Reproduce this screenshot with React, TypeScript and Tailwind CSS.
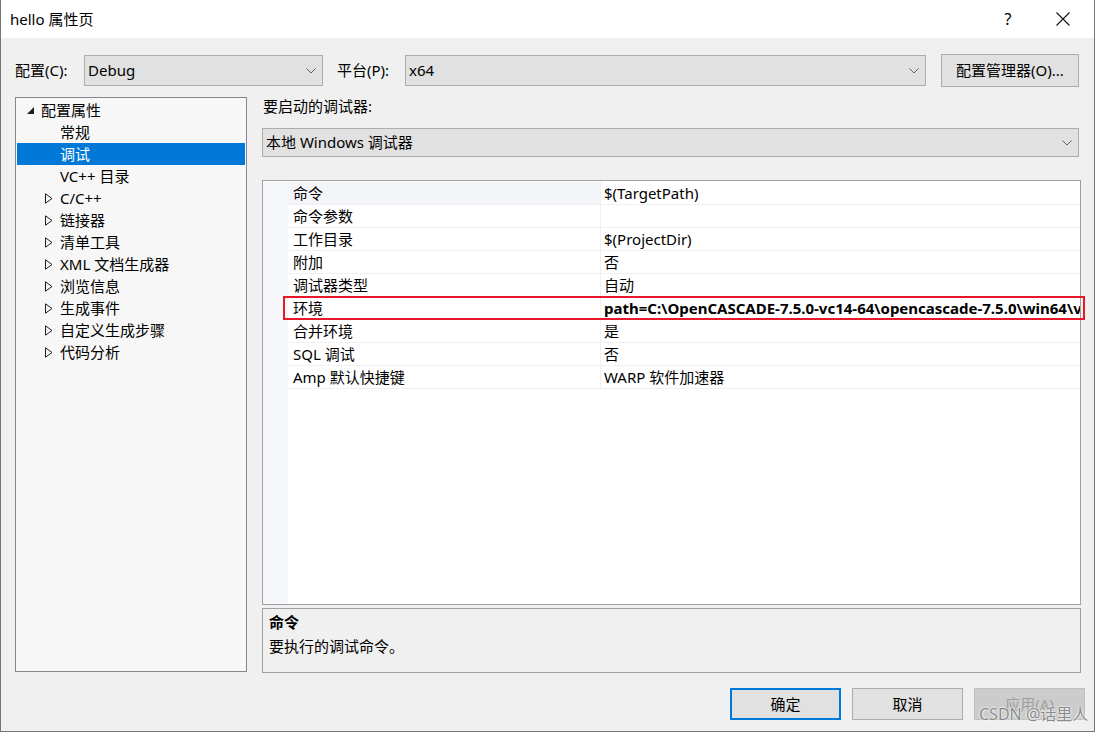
import React from "react";

const FONT = { fontFamily: '"Noto Sans", "Noto Sans CJK SC", sans-serif' };

function Chevron() {
  return (
    <svg width="10" height="6" viewBox="0 0 10 6" className="shrink-0">
      <path d="M0.5 0.5 L5 5 L9.5 0.5" fill="none" stroke="#606060" strokeWidth="1" />
    </svg>
  );
}

function Combo({ text, className }: { text: string; className: string }) {
  return (
    <div
      className={`shrink-0 flex items-center justify-between border border-[#adadad] bg-[#e1e1e1] pl-[3px] pr-[6px] ${className}`}
    >
      <span>{text}</span>
      <Chevron />
    </div>
  );
}

type TreeItem = { label: string; kind: "open" | "closed" | "leaf"; selected?: boolean };

const tree: TreeItem[] = [
  { label: "配置属性", kind: "open" },
  { label: "常规", kind: "leaf" },
  { label: "调试", kind: "leaf", selected: true },
  { label: "VC++ 目录", kind: "leaf" },
  { label: "C/C++", kind: "closed" },
  { label: "链接器", kind: "closed" },
  { label: "清单工具", kind: "closed" },
  { label: "XML 文档生成器", kind: "closed" },
  { label: "浏览信息", kind: "closed" },
  { label: "生成事件", kind: "closed" },
  { label: "自定义生成步骤", kind: "closed" },
  { label: "代码分析", kind: "closed" },
];

const props: { name: string; value: string; bold?: boolean }[] = [
  { name: "命令", value: "$(TargetPath)" },
  { name: "命令参数", value: "" },
  { name: "工作目录", value: "$(ProjectDir)" },
  { name: "附加", value: "否" },
  { name: "调试器类型", value: "自动" },
  { name: "环境", value: "path=C:\\OpenCASCADE-7.5.0-vc14-64\\opencascade-7.5.0\\win64\\vc14\\bin;%PATH%", bold: true },
  { name: "合并环境", value: "是" },
  { name: "SQL 调试", value: "否" },
  { name: "Amp 默认快捷键", value: "WARP 软件加速器" },
];

export default function App() {
  return (
    <div
      style={FONT}
      className="w-[1095px] h-[732px] flex flex-col border-x border-b border-[#767676] bg-[#f0f0f0] text-[15px] leading-none text-black overflow-hidden"
    >
      {/* Title bar */}
      <div className="h-[38px] shrink-0 bg-white flex items-center pl-[9px]">
        <span className="flex-1">hello 属性页</span>
        <span className="w-[20px] text-center text-[16px] mr-[36px]">?</span>
        <div className="w-[18px] flex justify-center mr-[22px]">
          <svg width="16" height="16" viewBox="0 0 16 16">
            <path d="M1.5 1.5 L14.5 14.5 M14.5 1.5 L1.5 14.5" stroke="#111" strokeWidth="1.1" />
          </svg>
        </div>
      </div>

      {/* Body */}
      <div className="flex flex-col pl-[14px] pr-[13px]">
        {/* Config row */}
        <div className="mt-[16px] h-[33px] flex items-center">
          <span className="w-[69px] shrink-0">配置(C):</span>
          <Combo text="Debug" className="w-[239px] h-[31px]" />
          <span className="ml-[14px] w-[68px] shrink-0">平台(P):</span>
          <Combo text="x64" className="w-[521px] h-[31px]" />
          <div className="ml-[15px] w-[138px] h-[33px] shrink-0 border border-[#adadad] bg-[#e1e1e1] flex items-center justify-center">
            配置管理器(O)...
          </div>
        </div>

        {/* Main */}
        <div className="mt-[10px] flex gap-[15px]">
          {/* Tree */}
          <div className="w-[232px] shrink-0 h-[575px] border border-[#828790] bg-[#f7f7f7] pt-[1px] px-[1px]">
            {tree.map((t) => (
              <div
                key={t.label}
                className={`h-[22px] flex items-center ${t.selected ? "bg-[#0078d7] text-white" : ""}`}
              >
                {t.kind === "open" ? (
                  <>
                    <span className="w-[17px] flex justify-end">
                      <svg width="7" height="7" viewBox="0 0 7 7">
                        <path d="M7 0 L7 7 L0 7 Z" fill="#1e1e1e" />
                      </svg>
                    </span>
                    <span className="ml-[7px]">{t.label}</span>
                  </>
                ) : t.kind === "closed" ? (
                  <>
                    <span className="w-[36px] flex justify-end">
                      <svg width="8" height="11" viewBox="0 0 8 11">
                        <path d="M0.5 0.8 L7 5.5 L0.5 10.2 Z" fill="none" stroke="#1e1e1e" strokeWidth="1" />
                      </svg>
                    </span>
                    <span className="ml-[7px]">{t.label}</span>
                  </>
                ) : (
                  <span className="ml-[43px]">{t.label}</span>
                )}
              </div>
            ))}
          </div>

          {/* Right column */}
          <div className="flex-1 min-w-0 flex flex-col">
            <div className="h-[16px] flex items-center pl-[1px] mt-[1px]">要启动的调试器:</div>
            <Combo text="本地 Windows 调试器" className="mt-[14px] w-[817px] h-[29px]" />

            {/* Property grid */}
            <div className="relative mt-[23px]">
              <div className="w-[819px] h-[425px] border border-[#a0a0a0] bg-white pt-[1px] overflow-hidden">
                {props.map((p, i) => (
                  <div key={p.name} className="h-[23px] flex">
                    <div className="w-[25px] shrink-0 bg-[#f5f7fb]" />
                    <div
                      className={`w-[313px] shrink-0 flex items-center pl-[5px] border-b border-r border-[#f0f0f0] ${
                        i === 0 ? "bg-[#f3f5f9]" : ""
                      }`}
                    >
                      {p.name}
                    </div>
                    <div
                      className={`flex-1 min-w-0 flex items-center pl-[3px] border-b border-[#f0f0f0] whitespace-nowrap overflow-hidden ${
                        p.bold ? "font-bold" : ""
                      }`}
                    >
                      {p.value}
                    </div>
                  </div>
                ))}
                <div className="h-full w-[25px] bg-[#f5f7fb]" />
              </div>
              {/* red annotation box */}
              <div className="absolute left-[21px] top-[116px] w-[802px] h-[24px] border-2 border-[#e6182a]" />
            </div>

            {/* Description */}
            <div className="mt-[3px] w-[819px] h-[65px] border border-[#a0a0a0] bg-[#f0f0f0] pl-[6px] pt-[5px]">
              <div className="font-bold h-[16px] flex items-center">命令</div>
              <div className="mt-[8px] h-[16px] flex items-center">要执行的调试命令。</div>
            </div>
          </div>
        </div>

        {/* Buttons */}
        <div className="mt-[15px] flex justify-end gap-[11px] -mr-[4px]">
          <div className="w-[111px] h-[32px] border-2 border-[#0078d7] bg-[#e1e1e1] flex items-center justify-center">
            确定
          </div>
          <div className="w-[111px] h-[32px] border border-[#adadad] bg-[#e1e1e1] flex items-center justify-center">
            取消
          </div>
          <div className="relative w-[111px] h-[32px] border border-[#bfbfbf] bg-[#cccccc] flex items-center justify-center text-[#a0a0a0]">
            应用(A)
            <span
              className="absolute left-[4px] top-[17px] text-[16px] text-[#8a8a8a] whitespace-nowrap"
              style={{ textShadow: "0 0 2px #fff, 0 0 2px #fff" }}
            >
              CSDN @话里人
            </span>
          </div>
        </div>
      </div>
    </div>
  );
}
